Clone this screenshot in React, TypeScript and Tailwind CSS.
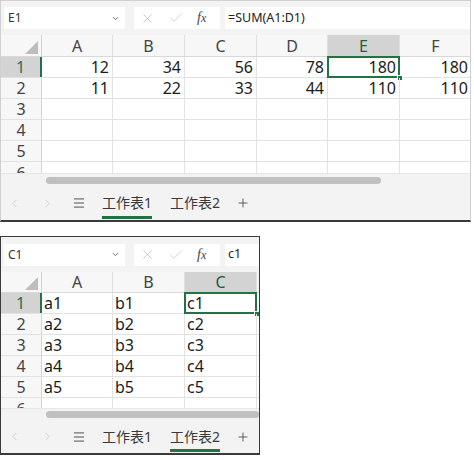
import React from "react";
import { X, Check, ChevronDown, ChevronLeft, ChevronRight, Menu, Plus } from "lucide-react";

type Col = { label: string; w: string };

type SheetProps = {
  outer: string;
  toolbarH: string;
  headerH: string;
  partialH: string;
  scrollH: string;
  tabsH: string;
  thumbW: string;
  nameBox: string;
  formula: string;
  cols: Col[];
  data: string[][];
  selCol: number;
  align: "right" | "left";
  activeTab: number;
};

const FONT = "font-['Noto_Sans','Noto_Sans_CJK_TC',sans-serif]";

function Sheet(p: SheetProps) {
  const rows = [1, 2, 3, 4, 5];
  return (
    <div className={`${p.outer} ${FONT} flex flex-col bg-white overflow-hidden`}>
      {/* toolbar */}
      <div className={`${p.toolbarH} bg-[#f3f3f3] flex items-center shrink-0`}>
        <div className="ml-[3px] w-[121px] h-[22px] bg-white flex items-center justify-between pl-[4px] pr-[5px]">
          <span className="text-[12px] text-[#333] leading-none">{p.nameBox}</span>
          <ChevronDown size={9} strokeWidth={2.2} className="text-[#555]" />
        </div>
        <div className="ml-[9px] w-[86px] h-[22px] bg-white flex items-center">
          <X size={15} strokeWidth={1.2} className="text-[#b8b8b8] ml-[6px]" />
          <Check size={16} strokeWidth={1.2} className="text-[#c4c4c4] ml-[13px]" />
          <span className="ml-[13px] font-['Liberation_Serif',serif] italic text-[14px] text-[#444] leading-none">
            f<span className="text-[12px]">x</span>
          </span>
        </div>
        <div className="ml-[5px] flex-1 h-[22px] bg-white flex items-center pl-[3px]">
          <span className="text-[12.5px] text-[#222] leading-none">{p.formula}</span>
        </div>
      </div>
      {/* column header */}
      <div className={`${p.headerH} flex shrink-0 bg-[#f7f7f7] border-b border-[#d9d9d9]`}>
        <div className="w-[41px] shrink-0 relative border-r border-[#d4d4d4]">
          <div className="absolute right-[3px] bottom-[2px] w-0 h-0 border-l-[13px] border-l-transparent border-b-[13px] border-b-[#bdbdbd]" />
        </div>
        {p.cols.map((c, i) => (
          <div
            key={c.label}
            className={`${c.w} shrink-0 flex items-center justify-center text-[16px] border-r border-[#e0e0e0] ${
              i === p.selCol ? "bg-[#d3d3d3] text-[#1f5f3b]" : "text-[#444]"
            }`}
          >
            {c.label}
          </div>
        ))}
      </div>
      {/* rows */}
      {rows.map((r) => (
        <div key={r} className="h-[21px] flex shrink-0 border-b border-[#e2e2e2]">
          <div
            className={`w-[41px] shrink-0 flex items-center justify-center text-[16px] ${
              r === 1
                ? "bg-[#d3d3d3] text-[#217346] border-r-2 border-[#217346]"
                : "bg-[#f7f7f7] text-[#444] border-r border-[#d4d4d4]"
            }`}
          >
            {r}
          </div>
          {p.cols.map((c, i) => {
            const v = p.data[r - 1]?.[i] ?? "";
            const sel = r === 1 && i === p.selCol;
            return (
              <div
                key={c.label}
                className={`${c.w} shrink-0 relative flex items-center text-[16px] text-[#1b1b1b] border-r border-[#e2e2e2] ${
                  p.align === "right" ? "justify-end pr-[3px]" : "justify-start pl-[2px]"
                }`}
              >
                {v}
                {sel && (
                  <>
                    <div className="absolute -left-[1px] -top-[1px] -right-[1px] -bottom-[1px] border-2 border-[#217346]" />
                    <div className="absolute -right-[4px] -bottom-[4px] w-[6px] h-[6px] bg-[#217346] border border-white" />
                  </>
                )}
              </div>
            );
          })}
        </div>
      ))}
      {/* partial row 6 */}
      <div className={`${p.partialH} flex shrink-0 overflow-hidden`}>
        <div className="w-[41px] shrink-0 bg-[#f7f7f7] border-r border-[#d4d4d4] h-[21px] flex items-center justify-center text-[16px] text-[#444]">
          6
        </div>
        {p.cols.map((c) => (
          <div key={c.label} className={`${c.w} shrink-0 h-[21px] border-r border-[#e2e2e2]`} />
        ))}
      </div>
      {/* scroll */}
      <div className={`${p.scrollH} shrink-0 bg-[#f3f3f3] flex items-center border-t border-[#e6e6e6]`}>
        <div className={`ml-[45px] ${p.thumbW} h-[7px] rounded-full bg-[#c0c0c0]`} />
      </div>
      {/* tabs */}
      <div className={`${p.tabsH} shrink-0 bg-[#f3f3f3] flex items-center relative`}>
        <ChevronLeft size={13} strokeWidth={1.3} className="text-[#c0c0c0] ml-[7px]" />
        <ChevronRight size={13} strokeWidth={1.3} className="text-[#c0c0c0] ml-[20px]" />
        <Menu size={14} strokeWidth={1.6} className="text-[#444] ml-[18px]" />
        <div className="ml-[16px] w-[50px] h-full flex flex-col items-center justify-center relative">
          <span className="text-[14px] text-[#3a3a3a] leading-none">工作表1</span>
          {p.activeTab === 0 && <div className="absolute bottom-[1px] left-0 right-0 h-[3px] bg-[#217346]" />}
        </div>
        <div className="ml-[18px] w-[50px] h-full flex flex-col items-center justify-center relative">
          <span className="text-[14px] text-[#3a3a3a] leading-none">工作表2</span>
          {p.activeTab === 1 && <div className="absolute bottom-[1px] left-0 right-0 h-[3px] bg-[#217346]" />}
        </div>
        <Plus size={14} strokeWidth={1.4} className="text-[#444] ml-[16px]" />
      </div>
    </div>
  );
}

export default function App() {
  const topCols: Col[] = [
    { label: "A", w: "w-[71px]" },
    { label: "B", w: "w-[72px]" },
    { label: "C", w: "w-[72px]" },
    { label: "D", w: "w-[71px]" },
    { label: "E", w: "w-[72px]" },
    { label: "F", w: "w-[72px]" },
  ];
  const botCols: Col[] = [
    { label: "A", w: "w-[71px]" },
    { label: "B", w: "w-[72px]" },
    { label: "C", w: "w-[72px]" },
  ];
  return (
    <div className="w-[474px] h-[460px] bg-white">
      <Sheet
        outer="w-[471px] border-t border-l border-r border-[#d0d0d0] border-b-2 border-b-[#3a3a3a]"
        toolbarH="h-[34px]"
        headerH="h-[22px]"
        partialH="h-[11px]"
        scrollH="h-[13px]"
        tabsH="h-[34px]"
        thumbW="w-[335px]"
        nameBox="E1"
        formula="=SUM(A1:D1)"
        cols={topCols}
        data={[
          ["12", "34", "56", "78", "180", "180"],
          ["11", "22", "33", "44", "110", "110"],
        ]}
        selCol={4}
        align="right"
        activeTab={0}
      />
      <div className="h-[14px]" />
      <Sheet
        outer="w-[260px] border border-[#3a3a3a] border-b-2"
        toolbarH="h-[35px]"
        headerH="h-[21px]"
        partialH="h-[10px]"
        scrollH="h-[12px]"
        tabsH="h-[33px]"
        thumbW="w-[220px]"
        nameBox="C1"
        formula="c1"
        cols={botCols}
        data={[
          ["a1", "b1", "c1"],
          ["a2", "b2", "c2"],
          ["a3", "b3", "c3"],
          ["a4", "b4", "c4"],
          ["a5", "b5", "c5"],
        ]}
        selCol={2}
        align="left"
        activeTab={1}
      />
    </div>
  );
}
